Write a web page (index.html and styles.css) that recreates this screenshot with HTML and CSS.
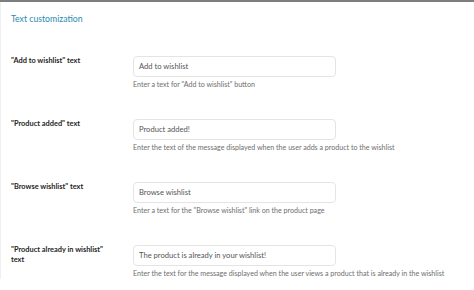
FILE: index.html
```html
<!DOCTYPE html>
<html>
<head>
<meta charset="utf-8">
<link rel="stylesheet" href="styles.css">
</head>
<body>
<div class="topbar"></div>
<div class="panel">
  <h2 class="title">Text customization</h2>
  <div class="row">
    <div class="label">"Add to wishlist" text</div>
    <div class="field">
      <div class="input">Add to wishlist</div>
      <div class="desc">Enter a text for "Add to wishlist" button</div>
    </div>
  </div>
  <div class="row">
    <div class="label">"Product added" text</div>
    <div class="field">
      <div class="input">Product added!</div>
      <div class="desc">Enter the text of the message displayed when the user adds a product to the wishlist</div>
    </div>
  </div>
  <div class="row">
    <div class="label">"Browse wishlist" text</div>
    <div class="field">
      <div class="input">Browse wishlist</div>
      <div class="desc">Enter a text for the "Browse wishlist" link on the product page</div>
    </div>
  </div>
  <div class="row">
    <div class="label">"Product already in wishlist"<br>text</div>
    <div class="field">
      <div class="input">The product is already in your wishlist!</div>
      <div class="desc">Enter the text for the message displayed when the user views a product that is already in the wishlist</div>
    </div>
  </div>
</div>
</body>
</html>
```
FILE: styles.css
```css
html, body {
  margin: 0;
  padding: 0;
  background: #fff;
  font-family: "Lato", "Open Sans", sans-serif;
  color: #444;
}
.topbar {
  height: 2px;
  background: #7d7d7d;
}
.panel {
  border-left: 1px solid #f0f0f0;
  padding: 11px 0 0 10px;
}
.title {
  margin: 0;
  font-size: 8.7px;
  font-weight: 400;
  color: #2b8ab2;
  line-height: 12px;
}
.row {
  display: flex;
  margin-top: 29px;
}
.title + .row {
  margin-top: 31px;
}
.label {
  width: 122px;
  flex-shrink: 0;
  font-size: 7.4px;
  font-weight: 700;
  color: #1e1e1e;
  line-height: 10px;
}
.field {
  display: flex;
  flex-direction: column;
}
.input {
  width: 191px;
  height: 19px;
  border: 1px solid #e4e4e4;
  border-radius: 4px;
  padding: 0 5px;
  font-size: 7.6px;
  line-height: 19px;
  color: #555;
}
.desc {
  font-size: 7.1px;
  color: #6e6e6e;
  margin-top: 2px;
  line-height: 11px;
  white-space: nowrap;
}
```
